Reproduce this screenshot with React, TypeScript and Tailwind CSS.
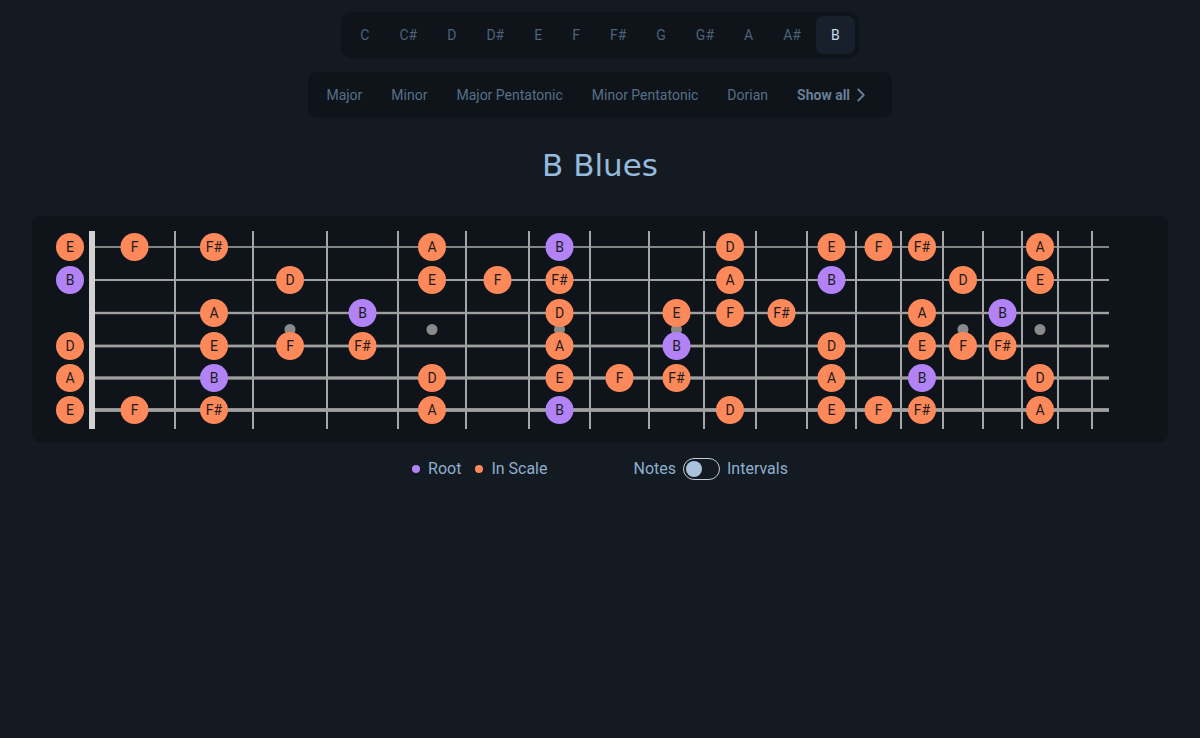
import { ChevronRight } from 'lucide-react'

const KEYS = ['C', 'C#', 'D', 'D#', 'E', 'F', 'F#', 'G', 'G#', 'A', 'A#', 'B']
const SCALES = ['Major', 'Minor', 'Major Pentatonic', 'Minor Pentatonic', 'Dorian']

// high E on top
const TUNING = [4, 11, 7, 2, 9, 4]
const ROOT = 11
const SCALE = [11, 2, 4, 5, 6, 9]

const STRING_Y = [31, 64, 97, 130, 162, 194]
const STRING_W = [1.6, 2, 2.4, 2.8, 3.3, 3.8]
const FRETS = [143, 221, 295, 366, 434, 497, 558, 617, 672, 724, 775, 824, 869, 911, 951, 990, 1026, 1060]
const NUT_X = 62
const MARKERS = [3, 5, 7, 9, 15, 17]

function noteX(fret: number) {
  if (fret === 0) return 38
  const prev = fret === 1 ? NUT_X : FRETS[fret - 2]
  return (prev + FRETS[fret - 1]) / 2
}

function Fretboard() {
  const notes: { x: number; y: number; name: string; root: boolean }[] = []
  TUNING.forEach((open, s) => {
    for (let f = 0; f <= 17; f++) {
      const n = (open + f) % 12
      if (SCALE.includes(n)) notes.push({ x: noteX(f), y: STRING_Y[s], name: KEYS[n], root: n === ROOT })
    }
  })

  return (
    <svg width={1136} height={226} viewBox="0 0 1136 226">
      {FRETS.map((x) => (
        <rect key={x} x={x - 1} y={15} width={2} height={198} fill="#a6a6a6" />
      ))}
      {STRING_Y.map((y, i) => (
        <rect key={y} x={60} y={y - STRING_W[i] / 2} width={1017} height={STRING_W[i]} fill="#a0a0a0" />
      ))}
      <rect x={57} y={15} width={6} height={198} fill="#d2d2d2" />
      {MARKERS.map((f) => (
        <circle key={f} cx={noteX(f)} cy={113.5} r={5.5} fill="#8a8a8a" />
      ))}
      {notes.map((n, i) => (
        <g key={i}>
          <circle cx={n.x} cy={n.y} r={14} fill={n.root ? '#b283f6' : '#fd8859'} />
          <text
            x={n.x}
            y={n.y + 5}
            textAnchor="middle"
            fontSize={14}
            fill="#1c1c1c"
            fontFamily="Roboto, sans-serif"
          >
            {n.name}
          </text>
        </g>
      ))}
    </svg>
  )
}

export default function App() {
  return (
    <div className="min-h-screen bg-[#131a21] px-8 pt-3 font-['Roboto',sans-serif]">
      <div className="flex justify-center">
        <div className="flex rounded-[10px] bg-[#0e141a] p-1">
          {KEYS.map((k) => (
            <button
              key={k}
              className={`h-[38px] rounded-lg px-[15px] text-sm ${
                k === 'B' ? 'bg-[#18212b] text-[#c8dcf0]' : 'text-[#4d6379]'
              }`}
            >
              {k}
            </button>
          ))}
        </div>
      </div>

      <div className="mt-[14px] flex justify-center">
        <div className="flex rounded-[10px] bg-[#0e141a] p-1">
          {SCALES.map((s) => (
            <button key={s} className="h-[38px] px-[14.5px] text-sm text-[#566f88]">
              {s}
            </button>
          ))}
          <button className="flex h-[38px] items-center pl-[14.5px] pr-[16px] text-sm font-bold text-[#667e96]">
            Show all
            <ChevronRight size={22} strokeWidth={2} />
          </button>
        </div>
      </div>

      <h1 className="mt-[29px] text-center font-['DejaVu_Sans',sans-serif] text-[31px] leading-[37px] text-[#96b9dc]">
        B Blues
      </h1>

      <div className="mt-8 h-[226px] rounded-lg bg-[#0e141a]">
        <Fretboard />
      </div>

      <div className="mt-[15px] flex items-center justify-center gap-[86px] text-base leading-6 text-[#8eafcf]">
        <div className="flex items-center gap-[14px]">
          <div className="flex items-center gap-2">
            <span className="h-2 w-2 rounded-full bg-[#b283f6]" />
            Root
          </div>
          <div className="flex items-center gap-2">
            <span className="h-2 w-2 rounded-full bg-[#fd8859]" />
            In Scale
          </div>
        </div>
        <div className="flex items-center gap-[7px]">
          Notes
          <div className="flex h-[22px] w-[37px] items-center rounded-full border-[1.5px] border-[#c2cad3] px-[2px]">
            <span className="h-4 w-4 rounded-full bg-[#a9c3de]" />
          </div>
          Intervals
        </div>
      </div>
    </div>
  )
}
